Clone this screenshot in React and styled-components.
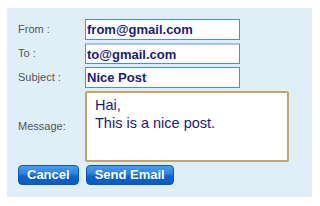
import React from "react";
import styled, { createGlobalStyle } from "styled-components";

const Global = createGlobalStyle`
  html, body { margin: 0; padding: 0; background: #ffffff; }
  body { width: 320px; height: 206px; overflow: hidden; font-family: "Liberation Sans", Arial, sans-serif; }
`;

const Page = styled.div`
  padding: 8px 8px 9px 7px;
`;

const Panel = styled.form`
  width: 305px;
  height: 189px;
  box-sizing: border-box;
  background: #e0eef8;
  padding: 11px 0 0 11px;
  display: flex;
  flex-direction: column;
  gap: 3px;
`;

const Row = styled.div`
  display: grid;
  grid-template-columns: 67px auto;
  align-items: center;
`;

const Label = styled.label`
  font-size: 11px;
  color: #555555;
  line-height: 13px;
`;

const Field = styled.input`
  box-sizing: border-box;
  width: 155px;
  height: 21px;
  margin: 0;
  border: 1px solid #4d8ce0;
  border-top: ${(p) => (p.$inset ? "2px solid #a9c4ea" : "1px solid #4d8ce0")};
  background: #ffffff;
  padding: 0 0 0 1px;
  font-family: "Liberation Sans", Arial, sans-serif;
  font-weight: bold;
  font-size: 13px;
  color: #1c1c78;
  outline: none;
`;

const Area = styled.textarea`
  box-sizing: border-box;
  width: 204px;
  height: 71px;
  margin: 0;
  border: 2px solid #c2a567;
  border-radius: 2px;
  background: #ffffff;
  padding: 3px 8px;
  font-family: "Liberation Sans", Arial, sans-serif;
  font-size: 14.5px;
  line-height: 18px;
  color: #1c1c78;
  resize: none;
  overflow: hidden;
  outline: none;
`;

const Buttons = styled.div`
  display: flex;
  gap: 7px;
  margin-top: 0px;
`;

const Button = styled.button`
  box-sizing: border-box;
  height: 20px;
  margin: 0;
  padding: 0 8px;
  border: 1px solid #0a58b8;
  border-radius: 4px;
  background: linear-gradient(to bottom, #4b9cf0 0%, #2a7fe0 45%, #0c64cc 55%, #0a5cc2 100%);
  color: #ffffff;
  font-family: "Liberation Sans", Arial, sans-serif;
  font-weight: bold;
  font-size: 13px;
  line-height: 18px;
  cursor: pointer;
`;

export default function App() {
  return (
    <Page>
      <Global />
      <Panel onSubmit={(e) => e.preventDefault()}>
        <Row>
          <Label>From :</Label>
          <Field defaultValue="from@gmail.com" />
        </Row>
        <Row>
          <Label>To :</Label>
          <Field $inset defaultValue="to@gmail.com" />
        </Row>
        <Row>
          <Label>Subject :</Label>
          <Field defaultValue="Nice Post" />
        </Row>
        <Row>
          <Label>Message:</Label>
          <Area defaultValue={"Hai,\nThis is a nice post."} />
        </Row>
        <Buttons>
          <Button type="button">Cancel</Button>
          <Button type="submit">Send Email</Button>
        </Buttons>
      </Panel>
    </Page>
  );
}
